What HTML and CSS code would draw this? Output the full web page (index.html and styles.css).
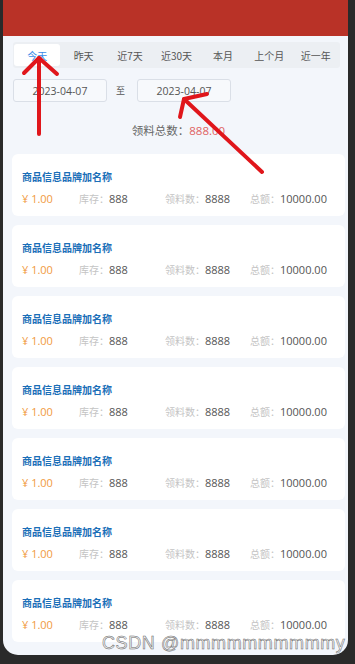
FILE: index.html
```html
<!DOCTYPE html>
<html lang="zh-CN">
<head>
    <meta charset="UTF-8">
    <meta name="viewport" content="width=device-width, initial-scale=1.0">
    <title>领料统计</title>
    <link rel="stylesheet" href="styles.css">
</head>
<body>
    <div class="phone">
        <div class="header"></div>

        <div class="content">
            <div class="tabs">
                <span class="tab active">今天</span>
                <span class="tab">昨天</span>
                <span class="tab">近7天</span>
                <span class="tab">近30天</span>
                <span class="tab">本月</span>
                <span class="tab">上个月</span>
                <span class="tab">近一年</span>
            </div>

            <div class="dates">
                <div class="date">2023-04-07</div>
                <span class="to">至</span>
                <div class="date">2023-04-07</div>
            </div>

            <p class="total">领料总数：<span class="total-num">888.00</span></p>

            <div class="list">
                <div class="card">
                    <p class="name">商品信息品牌加名称</p>
                    <div class="row">
                        <span class="price">¥ 1.00</span>
                        <span><em>库存：</em>888</span>
                        <span><em>领料数：</em>8888</span>
                        <span><em>总额：</em>10000.00</span>
                    </div>
                </div>
                <div class="card">
                    <p class="name">商品信息品牌加名称</p>
                    <div class="row">
                        <span class="price">¥ 1.00</span>
                        <span><em>库存：</em>888</span>
                        <span><em>领料数：</em>8888</span>
                        <span><em>总额：</em>10000.00</span>
                    </div>
                </div>
                <div class="card">
                    <p class="name">商品信息品牌加名称</p>
                    <div class="row">
                        <span class="price">¥ 1.00</span>
                        <span><em>库存：</em>888</span>
                        <span><em>领料数：</em>8888</span>
                        <span><em>总额：</em>10000.00</span>
                    </div>
                </div>
                <div class="card">
                    <p class="name">商品信息品牌加名称</p>
                    <div class="row">
                        <span class="price">¥ 1.00</span>
                        <span><em>库存：</em>888</span>
                        <span><em>领料数：</em>8888</span>
                        <span><em>总额：</em>10000.00</span>
                    </div>
                </div>
                <div class="card">
                    <p class="name">商品信息品牌加名称</p>
                    <div class="row">
                        <span class="price">¥ 1.00</span>
                        <span><em>库存：</em>888</span>
                        <span><em>领料数：</em>8888</span>
                        <span><em>总额：</em>10000.00</span>
                    </div>
                </div>
                <div class="card">
                    <p class="name">商品信息品牌加名称</p>
                    <div class="row">
                        <span class="price">¥ 1.00</span>
                        <span><em>库存：</em>888</span>
                        <span><em>领料数：</em>8888</span>
                        <span><em>总额：</em>10000.00</span>
                    </div>
                </div>
                <div class="card">
                    <p class="name">商品信息品牌加名称</p>
                    <div class="row">
                        <span class="price">¥ 1.00</span>
                        <span><em>库存：</em>888</span>
                        <span><em>领料数：</em>8888</span>
                        <span><em>总额：</em>10000.00</span>
                    </div>
                </div>
            </div>
        </div>
    </div>

    <!-- 标注箭头 -->
    <svg class="marks" width="355" height="664" viewBox="0 0 355 664">
        <g stroke="#e0161b" stroke-width="4" stroke-linecap="round" stroke-linejoin="round" fill="none">
            <path d="M39 134 L39 58"/>
            <path d="M24 73 L39 58 L57 74"/>
            <path d="M262 172 L184 99"/>
            <path d="M180 117 L184 99 L207 94"/>
        </g>
    </svg>

    <div class="watermark">CSDN @mmmmmmmmmmy</div>
</body>
</html>
```

FILE: styles.css
```css
body{
    margin: 0;
    width: 355px;
    height: 664px;
    background: #2a2a2a;
    font-family: "Noto Sans CJK SC", "Noto Sans", sans-serif;
    position: relative;
    overflow: hidden;
}

.phone{
    margin-left: 3px;
    width: 345px;
    height: 655px;
    background: #f3f6fb;
    border-radius: 0 0 15px 15px;
    overflow: hidden;
}

.header{
    height: 36px;
    background: #b93227;
}

.content{
    padding: 6px 3px 0 9px;
}

/* 기간 탭 */
.tabs{
    display: flex;
    margin: 0 5px 0 1px;
    height: 26px;
    padding: 2px 1px;
    box-sizing: border-box;
    background: #eceff3;
    border-radius: 3px;
}

.tab{
    flex: 1;
    display: flex;
    align-items: center;
    justify-content: center;
    font-size: 10px;
    color: #555;
    border-radius: 3px;
}

.tab.active{
    background: #fff;
    color: #3b8de8;
}

.dates{
    display: flex;
    align-items: center;
    margin-top: 11px;
    padding-left: 1px;
}

.date{
    width: 94px;
    height: 23px;
    box-sizing: border-box;
    border: 1px solid #dadfe7;
    border-radius: 3px;
    background: #f7f9fc;
    font-family: "Open Sans", "Noto Sans", sans-serif;
    font-size: 10.5px;
    color: #555;
    display: flex;
    align-items: center;
    justify-content: center;
}

.to{
    font-size: 9px;
    color: #555;
    margin: 0 12px 0 9px;
}

.total{
    margin: 20px 0 0;
    height: 16px;
    line-height: 16px;
    text-align: center;
    font-size: 11.5px;
    color: #666;
}

.total-num{
    color: #e06262;
    font-family: "Open Sans", sans-serif;
}

.list{
    margin-top: 16px;
}

.card{
    background: #fff;
    border-radius: 6px;
    height: 62px;
    box-sizing: border-box;
    padding: 16px 10px 0;
    margin-bottom: 9px;
}

.name{
    margin: 0 0 8px;
    line-height: 14px;
    font-size: 10px;
    font-weight: bold;
    color: #1b6fb8;
}

.row{
    display: grid;
    grid-template-columns: 57px 86px 85px auto;
    line-height: 14px;
    font-family: "Open Sans", "Noto Sans CJK SC", sans-serif;
    font-size: 11px;
    color: #555;
}

.row em{
    font-style: normal;
    font-family: "Noto Sans CJK SC", sans-serif;
    font-size: 10px;
    color: #c4c4c4;
}

.price{
    color: #f19a3e;
}

.marks{
    position: absolute;
    left: 0;
    top: 0;
    pointer-events: none;
}

.watermark{
    position: absolute;
    left: 102px;
    top: 633px;
    font-family: "Liberation Sans", sans-serif;
    font-size: 18px;
    color: rgba(240,240,240,0.85);
    -webkit-text-stroke: 0.5px #666;
    letter-spacing: 0.6px;
}
```
